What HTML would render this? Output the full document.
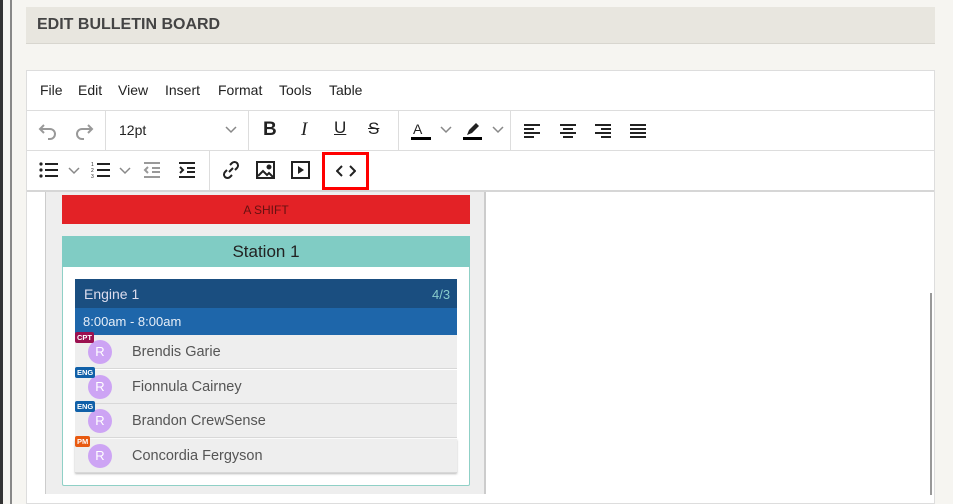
<!DOCTYPE html>
<html><head><style>
*{box-sizing:border-box;margin:0;padding:0}
body{width:953px;height:504px;overflow:hidden;background:#f6f5f1;font-family:"Liberation Sans",sans-serif;position:relative}
.abs{position:absolute}
.menu span{position:absolute;top:82px;font-size:14px;color:#222}
svg{position:absolute}
.row{position:absolute;left:75px;width:382px;height:34px;background:#eeeeee;border-bottom:1px solid #d8d8d8}
.av{position:absolute;left:13px;top:5px;width:24px;height:24px;border-radius:50%;background:#cda4f4;color:#fff;font-size:13px;text-align:center;line-height:24px}
.nm{position:absolute;left:57px;top:9px;font-size:14.5px;color:#555}
.tag{position:absolute;left:0;top:-3px;height:11px;padding:0 2px;font-size:7.5px;font-weight:bold;color:#fff;line-height:11px;border-radius:2px}
</style></head><body>
<div class="abs" style="left:0;top:0;width:3px;height:504px;background:#333"></div>
<div class="abs" style="left:10px;top:0;width:2px;height:504px;background:#888"></div>
<div class="abs" style="left:26px;top:7px;width:909px;height:37px;background:#e8e6df;border-bottom:1px solid #d8d6cf"></div>
<div class="abs" style="left:37px;top:16px;font-size:16px;font-weight:bold;color:#444">EDIT BULLETIN BOARD</div>
<div class="abs" style="left:26px;top:70px;width:909px;height:434px;background:#fff;border:1px solid #ddd"></div>
<div class="abs" style="left:27px;top:110px;width:907px;height:1px;background:#ddd"></div>
<div class="abs" style="left:27px;top:150px;width:907px;height:1px;background:#ddd"></div>
<div class="abs" style="left:27px;top:190px;width:907px;height:2px;background:#d6d6d6"></div>
<div class="menu"><span style="left:40px">File</span><span style="left:78px">Edit</span><span style="left:118px">View</span><span style="left:165px">Insert</span><span style="left:218px">Format</span><span style="left:279px">Tools</span><span style="left:329px">Table</span></div>
<div class="abs" style="left:105px;top:111px;width:1px;height:39px;background:#ddd"></div>
<div class="abs" style="left:248px;top:111px;width:1px;height:39px;background:#ddd"></div>
<div class="abs" style="left:398px;top:111px;width:1px;height:39px;background:#ddd"></div>
<div class="abs" style="left:510px;top:111px;width:1px;height:39px;background:#ddd"></div>
<div class="abs" style="left:209px;top:151px;width:1px;height:39px;background:#ddd"></div>
<svg style="left:38px;top:121px" width="20" height="20" viewBox="0 0 20 20" fill="none" stroke="#999" stroke-width="2"><path d="M6 4L2 8l4 4M2 8h10a5 5 0 0 1 0 10h-2"/></svg>
<svg style="left:74px;top:121px" width="20" height="20" viewBox="0 0 20 20" fill="none" stroke="#999" stroke-width="2"><path d="M14 4l4 4-4 4M18 8H8a5 5 0 0 0 0 10h2"/></svg>
<div class="abs" style="left:119px;top:122px;font-size:14px;color:#222">12pt</div>
<svg style="left:225px;top:126px" width="12" height="8" viewBox="0 0 12 8" fill="none" stroke="#888" stroke-width="1.5"><path d="M1 1l5 5 5-5"/></svg>
<div class="abs" style="left:263px;top:119px;font-size:19px;font-weight:bold;color:#222">B</div>
<div class="abs" style="left:301px;top:119px;font-size:19px;font-style:italic;font-family:'Liberation Serif',serif;color:#222">I</div>
<div class="abs" style="left:334px;top:118px;font-size:17px;text-decoration:underline;color:#222">U</div>
<div class="abs" style="left:368px;top:119px;font-size:17px;text-decoration:line-through;color:#222">S</div>
<div class="abs" style="left:413px;top:121px;font-size:14px;color:#222">A</div>
<div class="abs" style="left:411px;top:137px;width:20px;height:3px;background:#000"></div>
<svg style="left:440px;top:126px" width="12" height="8" viewBox="0 0 12 8" fill="none" stroke="#888" stroke-width="1.5"><path d="M1 1l5 5 5-5"/></svg>
<svg style="left:463px;top:121px" width="20" height="20" viewBox="0 0 20 20"><path d="M4 14l2-5 7-7 3 3-7 7z" fill="#222"/><rect x="0" y="16" width="19" height="3" fill="#000"/></svg>
<svg style="left:492px;top:126px" width="12" height="8" viewBox="0 0 12 8" fill="none" stroke="#888" stroke-width="1.5"><path d="M1 1l5 5 5-5"/></svg>
<svg style="left:523px;top:123px" width="18" height="16" viewBox="0 0 18 16" stroke="#222" stroke-width="2"><path d="M1 2h16M1 6h10M1 10h16M1 14h10"/></svg>
<svg style="left:559px;top:123px" width="18" height="16" viewBox="0 0 18 16" stroke="#222" stroke-width="2"><path d="M1 2h16M4 6h10M1 10h16M4 14h10"/></svg>
<svg style="left:594px;top:123px" width="18" height="16" viewBox="0 0 18 16" stroke="#222" stroke-width="2"><path d="M1 2h16M7 6h10M1 10h16M7 14h10"/></svg>
<svg style="left:629px;top:123px" width="18" height="16" viewBox="0 0 18 16" stroke="#222" stroke-width="2"><path d="M1 2h16M1 6h16M1 10h16M1 14h16"/></svg>
<svg style="left:39px;top:162px" width="20" height="16" viewBox="0 0 20 16"><g fill="#222"><circle cx="2" cy="2" r="1.6"/><circle cx="2" cy="8" r="1.6"/><circle cx="2" cy="14" r="1.6"/></g><path d="M6 2h13M6 8h13M6 14h13" stroke="#222" stroke-width="2"/></svg>
<svg style="left:68px;top:167px" width="12" height="8" viewBox="0 0 12 8" fill="none" stroke="#888" stroke-width="1.5"><path d="M1 1l5 5 5-5"/></svg>
<svg style="left:91px;top:162px" width="20" height="17" viewBox="0 0 20 17"><g font-size="5" fill="#222" font-family="Liberation Sans"><text x="0" y="4">1</text><text x="0" y="10">2</text><text x="0" y="16">3</text></g><path d="M6 2h13M6 8h13M6 14h13" stroke="#222" stroke-width="2"/></svg>
<svg style="left:119px;top:167px" width="12" height="8" viewBox="0 0 12 8" fill="none" stroke="#888" stroke-width="1.5"><path d="M1 1l5 5 5-5"/></svg>
<svg style="left:143px;top:162px" width="18" height="16" viewBox="0 0 18 16" stroke="#999" stroke-width="2" fill="none"><path d="M1 1h16M9 6h8M9 10h8M1 15h16M5 5l-3 3 3 3"/></svg>
<svg style="left:178px;top:162px" width="18" height="16" viewBox="0 0 18 16" stroke="#222" stroke-width="2" fill="none"><path d="M1 1h16M9 6h8M9 10h8M1 15h16M2 5l3 3-3 3"/></svg>
<svg style="left:221px;top:160px" width="20" height="20" viewBox="0 0 20 20" fill="none" stroke="#222" stroke-width="2"><path d="M8 12l4-4M9 5l2-2a3.5 3.5 0 0 1 5 5l-2 2M11 15l-2 2a3.5 3.5 0 0 1-5-5l2-2"/></svg>
<svg style="left:256px;top:161px" width="20" height="18" viewBox="0 0 20 18" fill="none" stroke="#222" stroke-width="2"><rect x="1" y="1" width="17" height="16"/><path d="M2 15l5-5 4 4 2-2 4 4" /><circle cx="13" cy="6" r="1.5" fill="#222"/></svg>
<svg style="left:291px;top:161px" width="20" height="18" viewBox="0 0 20 18"><rect x="1" y="1" width="17" height="16" fill="none" stroke="#222" stroke-width="2"/><path d="M7 5v8l6-4z" fill="#222"/></svg>
<div class="abs" style="left:322px;top:152px;width:47px;height:38px;border:3px solid #f00"></div>
<svg style="left:336px;top:165px" width="20" height="12" viewBox="0 0 20 12" fill="none" stroke="#222" stroke-width="2"><path d="M6 1L1 6l5 5M14 1l5 5-5 5"/></svg>
<div class="abs" style="left:45px;top:192px;width:441px;height:302px;background:#eee;border-left:1px solid #ccc;border-right:2px solid #ccc"></div>
<div class="abs" style="left:930px;top:293px;width:2px;height:202px;background:#999"></div>
<div class="abs" style="left:62px;top:195px;width:408px;height:29px;background:#e32226;color:#611;font-size:12px;text-align:center;line-height:31px">A SHIFT</div>
<div class="abs" style="left:62px;top:236px;width:408px;height:250px;background:#fff;border:1px solid #8fd0c6;border-radius:2px"></div>
<div class="abs" style="left:62px;top:236px;width:408px;height:31px;background:#80ccc4;font-size:17px;color:#222;text-align:center;line-height:31px">Station 1</div>
<div class="abs" style="left:75px;top:279px;width:382px;height:29px;background:#1a4e80"></div>
<div class="abs" style="left:84px;top:286px;font-size:14px;color:#dde">Engine 1</div>
<div class="abs" style="left:432px;top:287px;font-size:13px;color:#8cc">4/3</div>
<div class="abs" style="left:75px;top:308px;width:382px;height:27px;background:#1e66aa"></div>
<div class="abs" style="left:83px;top:314px;font-size:13px;color:#e6eef8">8:00am - 8:00am</div>
<div class="row" style="top:335px"><div class="av">R</div><div class="nm">Brendis Garie</div><div class="tag" style="background:#9b1050">CPT</div></div>
<div class="row" style="top:370px"><div class="av">R</div><div class="nm">Fionnula Cairney</div><div class="tag" style="background:#1060a8">ENG</div></div>
<div class="row" style="top:404px"><div class="av">R</div><div class="nm">Brandon CrewSense</div><div class="tag" style="background:#1060a8">ENG</div></div>
<div class="row" style="top:439px;box-shadow:0 1px 2px #bbb"><div class="av">R</div><div class="nm">Concordia Fergyson</div><div class="tag" style="background:#e85a10">PM</div></div>
</body></html>
